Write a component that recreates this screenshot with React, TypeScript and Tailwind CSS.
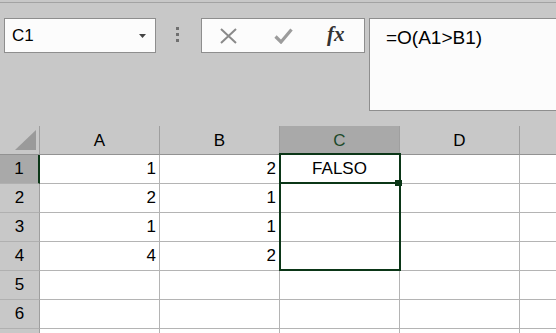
const cols = ["A", "B", "C", "D"];

const rows: { n: number; a?: string; b?: string; c?: string }[] = [
  { n: 1, a: "1", b: "2", c: "FALSO" },
  { n: 2, a: "2", b: "1" },
  { n: 3, a: "1", b: "1" },
  { n: 4, a: "4", b: "2" },
  { n: 5 },
  { n: 6 },
  { n: 7 },
];

function XIcon() {
  return (
    <svg width="17" height="16" viewBox="0 0 17 16">
      <path d="M1 1 L16 15 M16 1 L1 15" stroke="#8a8a8a" strokeWidth="2" fill="none" />
    </svg>
  );
}

function CheckIcon() {
  return (
    <svg width="19" height="16" viewBox="0 0 19 16">
      <path d="M1.5 8.5 L7 14 L17.5 1.5" stroke="#9c9c9c" strokeWidth="3.2" fill="none" />
    </svg>
  );
}

export default function App() {
  return (
    <div className="relative w-[556px] h-[333px] overflow-hidden bg-[#c8c8c8] font-['Liberation_Sans',sans-serif] text-black">
      {/* toolbar area */}
      <div className="mt-[2px] h-[124px] border-t border-[#a3a3a3] flex items-start pt-[15px] pl-[4px]">
        <div className="w-[152px] h-[35px] shrink-0 border border-[#8e8e8e] bg-[#fcfcfc] flex items-center pl-[7px] text-[17px]">
          <span>C1</span>
          <svg className="ml-auto mr-[9px]" width="7" height="4" viewBox="0 0 7 4">
            <path d="M0 0 H7 L3.5 4 Z" fill="#444" />
          </svg>
        </div>
        <div className="ml-[20px] mt-[9px] flex flex-col gap-[3px] shrink-0">
          <div className="w-[3px] h-[3px] bg-[#707070]" />
          <div className="w-[3px] h-[3px] bg-[#707070]" />
          <div className="w-[3px] h-[3px] bg-[#707070]" />
        </div>
        <div className="ml-[22px] w-[164px] h-[35px] shrink-0 border border-[#8e8e8e] bg-[#fcfcfc] flex items-center pl-[18px]">
          <XIcon />
          <div className="ml-[37px]">
            <CheckIcon />
          </div>
          <span className="ml-[34px] font-['Liberation_Serif',serif] italic font-bold text-[21px] leading-none text-[#333] -mt-[2px]">
            fx
          </span>
        </div>
        <div className="ml-[4px] w-[220px] h-[93px] shrink-0 border border-[#8e8e8e] bg-[#fcfcfc] pl-[16px] pt-[5px] text-[19px]">
          =O(A1&gt;B1)
        </div>
      </div>

      {/* header row */}
      <div className="flex h-[29px]">
        <div className="w-[40px] shrink-0 border-r border-b border-r-[#9f9f9f] border-b-[#929292] relative">
          <svg className="absolute left-0 top-0" width="40" height="28" viewBox="0 0 40 28">
            <polygon points="36,4 36,24 15,24" fill="#9a9a9a" />
          </svg>
        </div>
        {cols.map((c) => (
          <div
            key={c}
            className={
              c === "C"
                ? "w-[120px] shrink-0 border-r border-b border-r-[#9f9f9f] border-b-[#929292] bg-[#a9a9a9] text-[#1d4a2a] text-center text-[17px] leading-[28px] pt-[1px]"
                : "w-[120px] shrink-0 border-r border-b border-r-[#9f9f9f] border-b-[#929292] text-center text-[17px] leading-[28px] pt-[1px]"
            }
          >
            {c}
          </div>
        ))}
        <div className="flex-1 border-b border-[#929292]" />
      </div>

      {/* rows */}
      {rows.map((r) => (
        <div key={r.n} className="flex h-[29px]">
          <div
            className={
              r.n === 1
                ? "w-[40px] shrink-0 border-r-2 border-b border-r-[#0b3617] border-b-[#b0b0b0] bg-[#a9a9a9] text-center text-[17px] leading-[28px]"
                : "w-[40px] shrink-0 border-r border-b border-r-[#9f9f9f] border-b-[#b0b0b0] text-center text-[17px] leading-[28px]"
            }
          >
            {r.n < 7 ? r.n : ""}
          </div>
          <div className="w-[120px] shrink-0 bg-white border-r border-b border-[#b4b4b4] text-right pr-[3px] text-[17px] leading-[28px]">
            {r.a}
          </div>
          <div className="w-[120px] shrink-0 bg-white border-r border-b border-[#b4b4b4] text-right pr-[3px] text-[17px] leading-[28px]">
            {r.b}
          </div>
          <div className="w-[120px] shrink-0 bg-white border-r border-b border-[#b4b4b4] text-center text-[17px] leading-[28px]">
            {r.c}
          </div>
          <div className="w-[120px] shrink-0 bg-white border-r border-b border-[#b4b4b4]" />
          <div className="flex-1 bg-white border-b border-[#b4b4b4]" />
        </div>
      ))}

      {/* selection */}
      <div className="absolute left-[279px] top-[153px] w-[122px] h-[118px] border-2 border-[#0b3617]" />
      <div className="absolute left-[279px] top-[182px] w-[120px] h-[2px] bg-[#0b3617]" />
      <div className="absolute left-[395px] top-[180px] w-[7px] h-[6px] bg-[#0b3617]" />
    </div>
  );
}
